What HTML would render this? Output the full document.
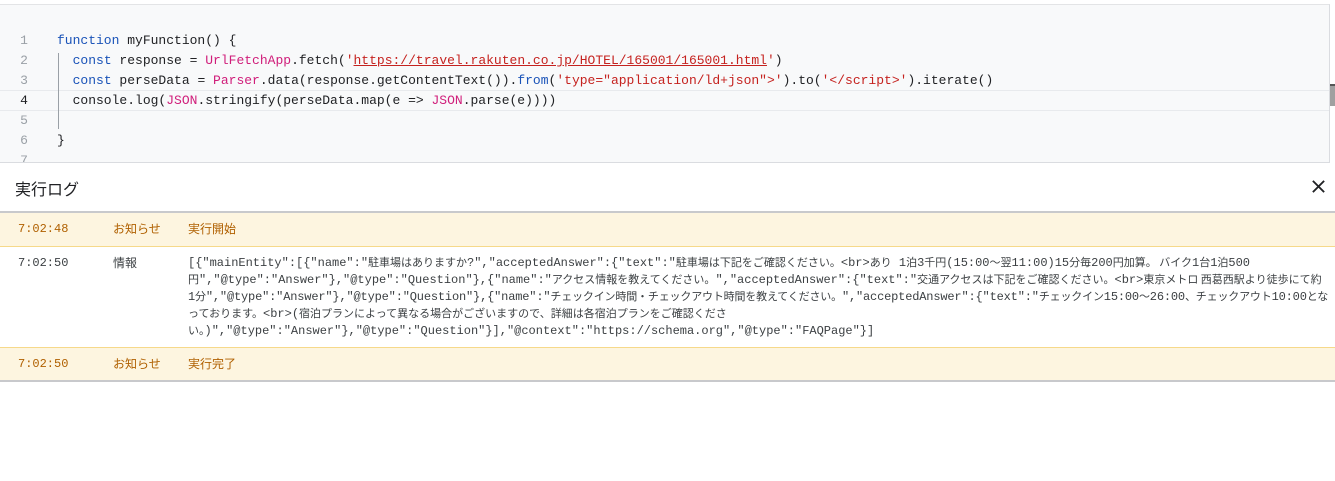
<!DOCTYPE html>
<html><head><meta charset="utf-8"><style>
body{margin:0;width:1335px;height:481px;background:#fff;overflow:hidden;position:relative;font-family:"Liberation Sans","Noto Sans CJK JP",sans-serif}
#ed{position:absolute;left:0;top:4px;width:1329px;height:157px;background:#f8f9fa;border-top:1px solid #e3e4e6;border-bottom:1px solid #dadce0;border-right:1px solid #dadce0}
.ln{position:absolute;left:0;width:1329px;height:20px;font:13px/20px "Liberation Mono","Noto Sans CJK JP",monospace;color:#202124;white-space:pre}
.ln .n{position:absolute;left:18px;width:12px;text-align:center;color:#9aa0a6}
.ln .c{position:absolute;left:57px}
.k{color:#1a53b8}.p{color:#d01d7a}.s{color:#c5221f}.u{color:#c5221f;text-decoration:underline}
#sb{position:absolute;left:1330px;top:84px;width:5px;height:20px;background:#a0a0a0;border-top:2px solid #555}
#hdr{position:absolute;left:15px;top:176px;font-size:16px;color:#202124}
#x{position:absolute;left:1311px;top:179px}
.row{position:absolute;left:0;width:1335px;font:12px/17px "Liberation Mono","Noto Sans CJK JP",monospace;color:#3c4043}
.y{background:#fdf5e0;color:#b06000}
.row .t{position:absolute;left:18px}.row .l{position:absolute;left:113px;font-family:"Liberation Sans","Noto Sans CJK JP",sans-serif}.row .m{position:absolute;left:188px;white-space:pre}
.row div.m{white-space:normal;width:1147px}
.m div{height:17px;line-height:17px;white-space:pre}
.j{font-size:11px;line-height:17px;font-family:"Noto Sans CJK JP",sans-serif}
</style></head><body>
<div id="ed">
<div class="ln" style="top:26px"><span class="n">1</span><span class="c"><span class="k">function</span> myFunction() {</span></div>
<div class="ln" style="top:46px"><span class="n">2</span><span class="c">  <span class="k">const</span> response = <span class="p">UrlFetchApp</span>.fetch(<span class="s">'</span><span class="u">https://travel.rakuten.co.jp/HOTEL/165001/165001.html</span><span class="s">'</span>)</span></div>
<div class="ln" style="top:66px"><span class="n">3</span><span class="c">  <span class="k">const</span> perseData = <span class="p">Parser</span>.data(response.getContentText()).<span class="k">from</span>(<span class="s">'type="application/ld+json"&gt;'</span>).to(<span class="s">'&lt;/script&gt;'</span>).iterate()</span></div>
<div class="ln" style="top:85px;border-top:1px solid #e8eaed;border-bottom:1px solid #e8eaed;height:19px;line-height:19px"><span class="n" style="color:#202124">4</span><span class="c">  console.log(<span class="p">JSON</span>.stringify(perseData.map(e =&gt; <span class="p">JSON</span>.parse(e))))</span></div>
<div class="ln" style="top:106px"><span class="n">5</span></div>
<div class="ln" style="top:126px"><span class="n">6</span><span class="c">}</span></div>
<div class="ln" style="top:146px;height:11px;overflow:hidden"><span class="n">7</span></div>
<div style="position:absolute;left:58px;top:48px;width:1px;height:76px;background:#9aa0a6"></div>
</div>
<div id="sb"></div>
<div id="hdr">実行ログ</div>
<svg id="x" width="15" height="15" viewBox="0 0 16 16"><path d="M2 2L14 14M14 2L2 14" stroke="#202124" stroke-width="2"/></svg>
<div style="position:absolute;left:0;top:211px;width:1335px;height:2px;background:#c8c9cc"></div>
<div class="row y" style="top:213px;height:33px;border-bottom:1px solid #f6d98a"><span class="t" style="top:8px">7:02:48</span><span class="l" style="top:8px">お知らせ</span><span class="m" style="top:8px;font-family:'Liberation Sans','Noto Sans CJK JP',sans-serif">実行開始</span></div>
<div class="row" style="top:247px;height:100px"><span class="t" style="top:8px">7:02:50</span><span class="l" style="top:8px">情報</span><div class="m" style="top:7px"><div>[{"mainEntity":[{"name":"<span class="j">駐車場はありますか</span>?","acceptedAnswer":{"text":"<span class="j">駐車場は下記をご確認ください。</span>&lt;br&gt;<span class="j">あり</span> 1<span class="j">泊</span>3<span class="j">千円</span>(15:00<span class="j">～翌</span>11:00)15<span class="j">分毎</span>200<span class="j">円加算。 バイク</span>1<span class="j">台</span>1<span class="j">泊</span>500</div><div><span class="j">円</span>","@type":"Answer"},"@type":"Question"},{"name":"<span class="j">アクセス情報を教えてください。</span>","acceptedAnswer":{"text":"<span class="j">交通アクセスは下記をご確認ください。</span>&lt;br&gt;<span class="j">東京メトロ 西葛西駅より徒歩にて約</span></div><div style="letter-spacing:-0.17px">1<span class="j">分</span>","@type":"Answer"},"@type":"Question"},{"name":"<span class="j">チェックイン時間・チェックアウト時間を教えてください。</span>","acceptedAnswer":{"text":"<span class="j">チェックイン</span>15:00<span class="j">～</span>26:00<span class="j">、チェックアウト</span>10:00<span class="j">とな</span></div><div><span class="j">っております。</span>&lt;br&gt;(<span class="j">宿泊プランによって異なる場合がございますので、詳細は各宿泊プランをご確認くださ</span></div><div><span class="j">い。</span>)","@type":"Answer"},"@type":"Question"}],"@context":"https://schema.org","@type":"FAQPage"}]</div></div></div>
<div class="row y" style="top:347px;height:32px;border-top:1px solid #f6d98a"><span class="t" style="top:8px">7:02:50</span><span class="l" style="top:8px">お知らせ</span><span class="m" style="top:8px;font-family:'Liberation Sans','Noto Sans CJK JP',sans-serif">実行完了</span></div>
<div style="position:absolute;left:0;top:380px;width:1335px;height:2px;background:#c8c9cc"></div>
</body></html>
